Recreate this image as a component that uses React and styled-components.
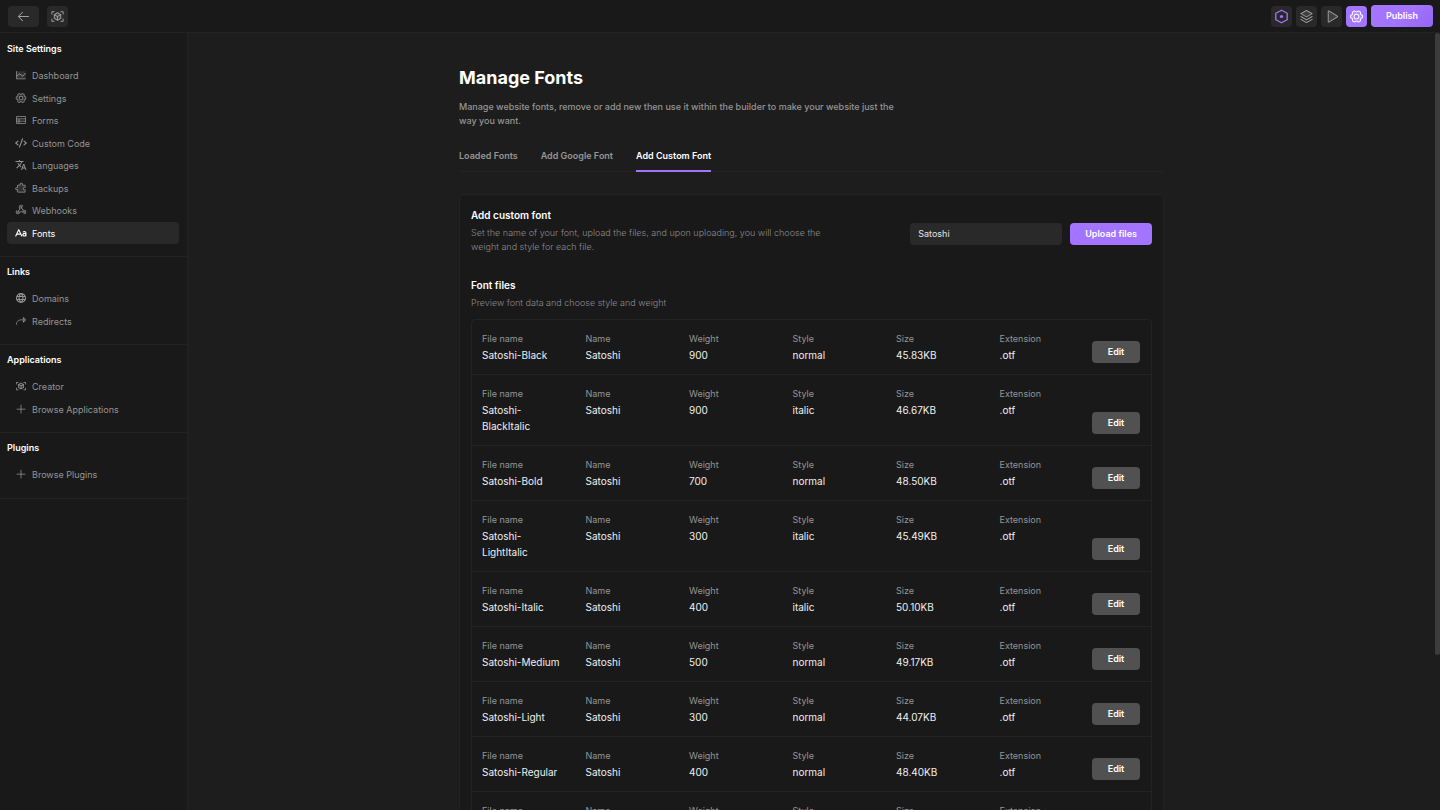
import React, { useState } from 'react';
import styled, { createGlobalStyle } from 'styled-components';
import { MdTranslate } from 'react-icons/md';
import {
  PiArrowBendUpRightDuotone,
  PiArrowLeft,
  PiChartLineDuotone,
  PiCodeBold,
  PiCubeFocusDuotone,
  PiGearSixDuotone,
  PiGlobeBold,
  PiPlayDuotone,
  PiPlus,
  PiPuzzlePieceDuotone,
  PiStackDuotone,
  PiTableDuotone,
  PiTextAaBold,
  PiWebhooksLogoDuotone,
} from 'react-icons/pi';

const GlobalStyle = createGlobalStyle`
  * {
    box-sizing: border-box;
  }

  body {
    margin: 0;
    background: #1d1d1d;
    color: #fff;
    font-family: Inter, 'Liberation Sans', sans-serif;
    font-size: 9px;
  }

  h1, h2, h3, p, ul, dl, dd {
    margin: 0;
    padding: 0;
  }

  ul {
    list-style: none;
  }

  button, input {
    font-family: inherit;
  }
`;

const Shell = styled.div`
  height: 100vh;
  display: flex;
  flex-direction: column;
`;

const TopBar = styled.header`
  display: flex;
  justify-content: space-between;
  align-items: center;
  padding: 5px 7px 5px 8px;
  background: #191919;
  border-bottom: 1px solid #232323;
`;

const BarGroup = styled.div`
  display: flex;
  align-items: center;
  gap: ${props => props.$gap};
`;

const IconButton = styled.button`
  width: ${props => (props.$wide ? '31px' : '21px')};
  height: 21px;
  display: flex;
  align-items: center;
  justify-content: center;
  padding: 0;
  border: none;
  border-radius: 4px;
  background: ${props => (props.$active ? '#a274ff' : '#292929')};
  color: ${props => (props.$active ? '#fff' : '#a0a0a0')};
  font-size: 15px;
  cursor: pointer;
`;

const Button = styled.button`
  min-width: 48px;
  height: 22px;
  padding: 0 15px;
  border: none;
  border-radius: 4px;
  background: ${props => (props.$primary ? '#a274ff' : '#515151')};
  color: #fff;
  font-size: 9px;
  font-weight: 600;
  line-height: 20px;
  cursor: pointer;
`;

const PublishButton = styled(Button)`
  background: linear-gradient(135deg, #a274ff 50%, #9566f5);
`;

const Body = styled.div`
  flex: 1;
  min-height: 0;
  display: flex;
`;

const Sidebar = styled.nav`
  width: 188px;
  flex-shrink: 0;
  padding-top: 1px;
  background: #191919;
  border-right: 1px solid #232323;
`;

const Section = styled.section`
  padding: 8px 8px 12px 7px;
  border-bottom: 1px solid #232323;
`;

const SectionTitle = styled.h2`
  margin-bottom: 8px;
  font-size: 9px;
  font-weight: 600;
  line-height: 14px;
`;

const NavItem = styled.li`
  &:nth-child(odd) {
    margin-bottom: 1px;
  }
`;

const NavLink = styled.a`
  height: 22px;
  display: flex;
  align-items: center;
  gap: 5px;
  padding: 0 8px;
  border-radius: 4px;
  background: ${props => (props.$active ? '#292929' : 'transparent')};
  color: ${props => (props.$active ? '#fff' : '#959595')};
  text-decoration: none;

  svg {
    font-size: 12px;
  }
`;

const Main = styled.main`
  position: relative;
  flex: 1;
  min-width: 0;
`;

const Scroller = styled.div`
  height: 100%;
  padding: 33px 5px 24px 0;
  overflow-y: auto;
  scrollbar-width: none;
`;

const ScrollThumb = styled.div`
  position: absolute;
  top: 0;
  right: 0;
  width: 5px;
  height: 80%;
  border-radius: 3px;
  background: #3c3c3c;
`;

const Content = styled.div`
  max-width: 705px;
  margin: 0 auto;
`;

const Title = styled.h1`
  font-size: 18px;
  font-weight: 700;
  line-height: 24px;
`;

const Lead = styled.p`
  max-width: 448px;
  margin-top: 10px;
  color: #959595;
  font-weight: 500;
  line-height: 14px;
`;

const Tabs = styled.div`
  display: flex;
  gap: 23px;
  margin-top: 16px;
  border-bottom: 1px solid #232323;
`;

const Tab = styled.button`
  height: 28px;
  margin-bottom: -1px;
  padding: 0 0 4px;
  border: none;
  border-bottom: 2px solid ${props => (props.$active ? '#a274ff' : 'transparent')};
  background: none;
  color: ${props => (props.$active ? '#fff' : '#959595')};
  font-size: 9px;
  font-weight: 600;
  cursor: pointer;
`;

const Panel = styled.section`
  margin-top: 22px;
  padding: 12px 11px;
  background: #191919;
  border: 1px solid #232323;
  border-radius: 4px;
`;

const UploadRow = styled.div`
  display: flex;
  align-items: center;
  gap: 8px;
`;

const UploadText = styled.div`
  flex: 1;
  padding-bottom: 6px;
`;

const PanelTitle = styled.h3`
  font-size: 10px;
  font-weight: 600;
  line-height: 16px;
`;

const PanelText = styled.p`
  max-width: 368px;
  margin-top: 3px;
  color: #8c8c8c;
  font-weight: 300;
  line-height: 14px;
`;

const NameInput = styled.input`
  width: 152px;
  height: 22px;
  padding: 0 8px;
  border: none;
  border-radius: 4px;
  outline: none;
  background: #292929;
  color: #e4e4e4;
  font-size: 9px;
`;

const Files = styled.div`
  margin-top: 17px;
`;

const FileList = styled.ul`
  margin-top: 9px;
  border: 1px solid #232323;
  border-radius: 4px;
`;

const FileRow = styled.li`
  display: flex;
  align-items: flex-end;
  padding: 11px 11px 11px 10px;
  border-bottom: 1px solid #232323;

  &:last-child {
    border-bottom: none;
  }
`;

const FileData = styled.dl`
  flex: 1;
  align-self: flex-start;
  display: grid;
  grid-template-columns: repeat(6, minmax(0, 1fr));
  column-gap: 11px;
`;

const FieldBox = styled.div`
  padding-right: 12px;
`;

const Label = styled.dt`
  color: #959595;
  line-height: 16px;
`;

const Value = styled.dd`
  color: #f0f0f0;
  font-size: 10px;
  line-height: 16px;
`;

const SECTIONS = [
  {
    title: 'Site Settings',
    items: [
      ['Dashboard', PiChartLineDuotone],
      ['Settings', PiGearSixDuotone],
      ['Forms', PiTableDuotone],
      ['Custom Code', PiCodeBold],
      ['Languages', MdTranslate],
      ['Backups', PiPuzzlePieceDuotone],
      ['Webhooks', PiWebhooksLogoDuotone],
      ['Fonts', PiTextAaBold],
    ],
  },
  {
    title: 'Links',
    items: [
      ['Domains', PiGlobeBold],
      ['Redirects', PiArrowBendUpRightDuotone],
    ],
  },
  {
    title: 'Applications',
    items: [
      ['Creator', PiCubeFocusDuotone],
      ['Browse Applications', PiPlus],
    ],
  },
  {
    title: 'Plugins',
    items: [['Browse Plugins', PiPlus]],
  },
];

const TABS = ['Loaded Fonts', 'Add Google Font', 'Add Custom Font'];

const FILES = [
  { file: 'Satoshi-Black', weight: 900, style: 'normal', size: '45.83KB' },
  { file: 'Satoshi-BlackItalic', weight: 900, style: 'italic', size: '46.67KB' },
  { file: 'Satoshi-Bold', weight: 700, style: 'normal', size: '48.50KB' },
  { file: 'Satoshi-LightItalic', weight: 300, style: 'italic', size: '45.49KB' },
  { file: 'Satoshi-Italic', weight: 400, style: 'italic', size: '50.10KB' },
  { file: 'Satoshi-Medium', weight: 500, style: 'normal', size: '49.17KB' },
  { file: 'Satoshi-Light', weight: 300, style: 'normal', size: '44.07KB' },
  { file: 'Satoshi-Regular', weight: 400, style: 'normal', size: '48.40KB' },
  { file: 'Satoshi-BoldItalic', weight: 700, style: 'italic', size: '49.62KB' },
  { file: 'Satoshi-MediumItalic', weight: 500, style: 'italic', size: '50.33KB' },
];

function HexagonIcon() {
  return (
    <svg width="15" height="15" viewBox="0 0 15 15" fill="none">
      <path d="M7.5 1.2 13.2 4.3V10.7L7.5 13.8 1.8 10.7V4.3Z" stroke="#a274ff" strokeWidth="1.3" strokeLinejoin="round" />
      <circle cx="7.5" cy="7.5" r="1.6" fill="#a274ff" />
    </svg>
  );
}

function Field({ label, value }) {
  return (
    <FieldBox>
      <Label>{label}</Label>
      <Value>{value}</Value>
    </FieldBox>
  );
}

function App() {
  const [tab, setTab] = useState('Add Custom Font');
  const [page, setPage] = useState('Fonts');
  const [fontName, setFontName] = useState('Satoshi');

  return (
    <Shell>
      <GlobalStyle />
      <TopBar>
        <BarGroup $gap="8px">
          <IconButton $wide aria-label="Back"><PiArrowLeft /></IconButton>
          <IconButton aria-label="Creator"><PiCubeFocusDuotone /></IconButton>
        </BarGroup>
        <BarGroup $gap="4px">
          <IconButton aria-label="Builder"><HexagonIcon /></IconButton>
          <IconButton aria-label="Layers"><PiStackDuotone /></IconButton>
          <IconButton aria-label="Preview"><PiPlayDuotone /></IconButton>
          <IconButton $active aria-label="Settings"><PiGearSixDuotone /></IconButton>
          <PublishButton>Publish</PublishButton>
        </BarGroup>
      </TopBar>

      <Body>
        <Sidebar>
          {SECTIONS.map((section) => (
            <Section key={section.title}>
              <SectionTitle>{section.title}</SectionTitle>
              <ul>
                {section.items.map(([name, Icon]) => (
                  <NavItem key={name}>
                    <NavLink href="#" $active={name === page} onClick={() => setPage(name)}>
                      <Icon />
                      {name}
                    </NavLink>
                  </NavItem>
                ))}
              </ul>
            </Section>
          ))}
        </Sidebar>

        <Main>
          <Scroller>
            <Content>
              <Title>Manage Fonts</Title>
              <Lead>
                Manage website fonts, remove or add new then use it within the builder to make
                your website just the way you want.
              </Lead>
              <Tabs role="tablist">
                {TABS.map((name) => (
                  <Tab
                    key={name}
                    role="tab"
                    aria-selected={name === tab}
                    $active={name === tab}
                    onClick={() => setTab(name)}
                  >
                    {name}
                  </Tab>
                ))}
              </Tabs>

              <Panel>
                <UploadRow>
                  <UploadText>
                    <PanelTitle>Add custom font</PanelTitle>
                    <PanelText>
                      Set the name of your font, upload the files, and upon uploading, you will
                      choose the weight and style for each file.
                    </PanelText>
                  </UploadText>
                  <NameInput
                    aria-label="Font name"
                    value={fontName}
                    onChange={(e) => setFontName(e.target.value)}
                  />
                  <Button $primary>Upload files</Button>
                </UploadRow>

                <Files>
                  <PanelTitle>Font files</PanelTitle>
                  <PanelText>Preview font data and choose style and weight</PanelText>
                  <FileList>
                    {FILES.map((item) => (
                      <FileRow key={item.file}>
                        <FileData>
                          <Field label="File name" value={item.file} />
                          <Field label="Name" value="Satoshi" />
                          <Field label="Weight" value={item.weight} />
                          <Field label="Style" value={item.style} />
                          <Field label="Size" value={item.size} />
                          <Field label="Extension" value=".otf" />
                        </FileData>
                        <Button>Edit</Button>
                      </FileRow>
                    ))}
                  </FileList>
                </Files>
              </Panel>
            </Content>
          </Scroller>
          <ScrollThumb />
        </Main>
      </Body>
    </Shell>
  );
}

export default App;
